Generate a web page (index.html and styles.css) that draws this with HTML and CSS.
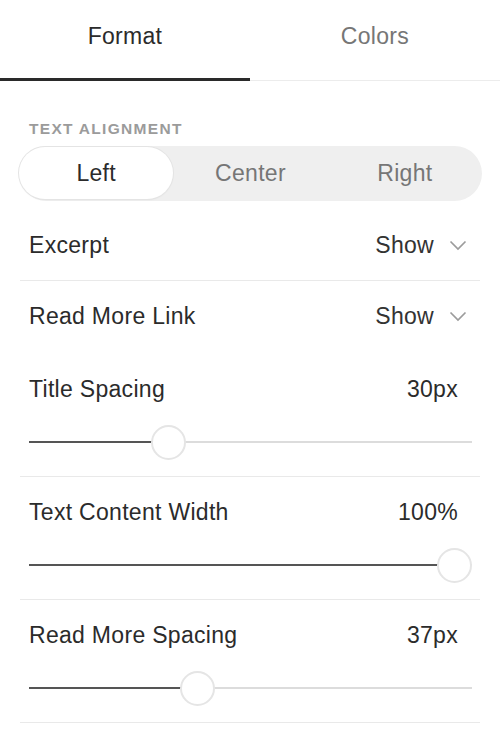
FILE: index.html
```html
<!DOCTYPE html>
<html lang="en">
<head>
    <meta charset="UTF-8">
    <meta name="viewport" content="width=device-width, initial-scale=1.0">
    <title>Format</title>
    <link rel="stylesheet" href="styles.css">
</head>
<body>
    <nav class="tabs">
        <div class="tab active">Format</div>
        <div class="tab">Colors</div>
    </nav>

    <div class="section-label">TEXT ALIGNMENT</div>
    <div class="segmented">
        <div class="segment active">Left</div>
        <div class="segment">Center</div>
        <div class="segment">Right</div>
    </div>

    <div class="option-row divided">
        <span class="option-name">Excerpt</span>
        <span class="option-select">Show
            <svg class="chevron" width="18" height="11" viewBox="0 0 18 11"><polyline points="1.5,1.5 9,9 16.5,1.5" fill="none" stroke="#9c9c9c" stroke-width="1.7"/></svg>
        </span>
    </div>

    <div class="option-row">
        <span class="option-name">Read More Link</span>
        <span class="option-select">Show
            <svg class="chevron" width="18" height="11" viewBox="0 0 18 11"><polyline points="1.5,1.5 9,9 16.5,1.5" fill="none" stroke="#9c9c9c" stroke-width="1.7"/></svg>
        </span>
    </div>

    <div class="slider-block first">
        <div class="slider-head">
            <span class="option-name">Title Spacing</span>
            <span class="slider-value">30px</span>
        </div>
        <div class="slider" style="--value: 30">
            <div class="slider-fill"></div>
            <div class="slider-thumb"></div>
        </div>
    </div>

    <div class="slider-block">
        <div class="slider-head">
            <span class="option-name">Text Content Width</span>
            <span class="slider-value">100%</span>
        </div>
        <div class="slider" style="--value: 100">
            <div class="slider-fill"></div>
            <div class="slider-thumb"></div>
        </div>
    </div>

    <div class="slider-block">
        <div class="slider-head">
            <span class="option-name">Read More Spacing</span>
            <span class="slider-value">37px</span>
        </div>
        <div class="slider" style="--value: 37">
            <div class="slider-fill"></div>
            <div class="slider-thumb"></div>
        </div>
    </div>
</body>
</html>
```

FILE: styles.css
```css
:root {
    --text-color: #2b2b2b;
    --muted-color: #767676;
    --line-color: #e9e9e9;
}

body {
    margin: 0;
    padding: 0;
    font-family: 'Liberation Sans', Arial, sans-serif;
    font-size: 23px;
    letter-spacing: 0.3px;
    color: var(--text-color);
    background: white;
}

.tabs {
    display: flex;
}

.tab {
    flex: 1;
    height: 81px;
    box-sizing: border-box;
    line-height: 72px;
    text-align: center;
    color: var(--muted-color);
    border-bottom: 1px solid #ececec;
}

.tab.active {
    color: var(--text-color);
    border-bottom: 3px solid #2a2a2a;
}

.section-label {
    margin: 38px 0 7px 29px;
    line-height: 20px;
    font-size: 15.5px;
    font-weight: bold;
    letter-spacing: 1.3px;
    color: #9b9b9b;
}

.segmented {
    display: flex;
    margin: 0 18px 0 19px;
    height: 55px;
    box-sizing: border-box;
    padding: 1px 0 2px;
    background: #efefef;
    border-radius: 28px;
}

.segment {
    flex: 1;
    line-height: 52px;
    text-align: center;
    color: var(--muted-color);
    border-radius: 27px;
}

.segment.active {
    background: white;
    color: var(--text-color);
    box-shadow: 0 0 0 1px #e4e4e4, 0 1px 2px rgba(0,0,0,0.06);
}

.option-row {
    display: flex;
    justify-content: space-between;
    align-items: center;
    margin: 9px 20px 0;
    padding: 0 13px 0 9px;
    height: 70px;
}

.option-row.divided {
    border-bottom: 1px solid var(--line-color);
}

.option-row + .option-row {
    margin-top: 0;
}

.option-select {
    display: flex;
    align-items: center;
    gap: 15px;
    color: #333;
}

.chevron {
    display: block;
}

.slider-block {
    margin: 0 20px;
    padding-bottom: 16px;
    border-bottom: 1px solid var(--line-color);
}

.slider-block.first {
    margin-top: 3px;
}

.slider-head {
    display: flex;
    justify-content: space-between;
    align-items: center;
    height: 70px;
    padding: 0 22px 0 9px;
}

.slider {
    position: relative;
    height: 36px;
    margin: 0 8px 0 9px;
    background: linear-gradient(#dcdcdc, #dcdcdc) center / 100% 2px no-repeat;
}

.slider-fill {
    position: absolute;
    left: 0;
    top: 17px;
    height: 2px;
    width: calc((100% - 35px) * var(--value) / 100 + 17px);
    background: #555;
}

.slider-thumb {
    position: absolute;
    top: 0.5px;
    left: calc((100% - 35px) * var(--value) / 100);
    width: 35px;
    height: 35px;
    box-sizing: border-box;
    border: 2px solid #e5e5e5;
    border-radius: 50%;
    background: white;
}
```
